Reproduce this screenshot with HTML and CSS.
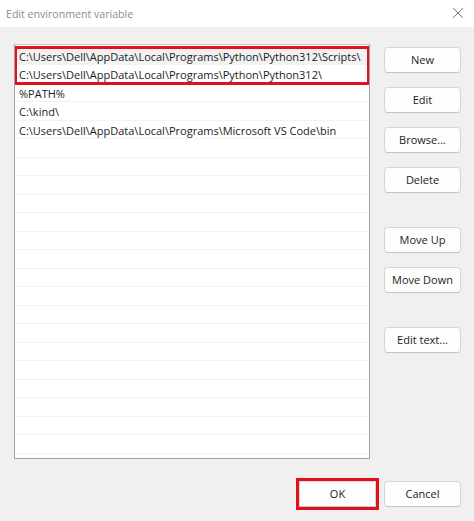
FILE: index.html
```html
<!DOCTYPE html>
<html lang="en">
<head>
  <meta charset="UTF-8">
  <title>Edit environment variable</title>
  <link rel="stylesheet" href="styles.css">
</head>
<body>
  <div class="dialog">
    <div class="titlebar">
      <span class="title">Edit environment variable</span>
      <span class="close">
        <svg width="12" height="12" viewBox="0 0 12 12"><path d="M1 1L11 11M11 1L1 11" stroke="#7a7a7a" stroke-width="1" fill="none"/></svg>
      </span>
    </div>
    <div class="content">
      <div class="main">
        <div class="list">
          <!--前两行是被标出来的-->
          <div class="marked">
            <div class="row sel">C:\Users\Dell\AppData\Local\Programs\Python\Python312\Scripts\</div>
            <div class="row">C:\Users\Dell\AppData\Local\Programs\Python\Python312\</div>
          </div>
          <div class="row">%PATH%</div>
          <div class="row">C:\kind\</div>
          <div class="row">C:\Users\Dell\AppData\Local\Programs\Microsoft VS Code\bin</div>
          <div class="row"></div>
          <div class="row"></div>
          <div class="row"></div>
          <div class="row"></div>
          <div class="row"></div>
          <div class="row"></div>
          <div class="row"></div>
          <div class="row"></div>
          <div class="row"></div>
          <div class="row"></div>
          <div class="row"></div>
          <div class="row"></div>
          <div class="row"></div>
          <div class="row"></div>
          <div class="row"></div>
          <div class="row"></div>
          <div class="row"></div>
        </div>
        <div class="side">
          <a class="btn" href="javascript:;">New</a>
          <a class="btn" href="javascript:;">Edit</a>
          <a class="btn" href="javascript:;">Browse...</a>
          <a class="btn" href="javascript:;">Delete</a>
          <a class="btn gap" href="javascript:;">Move Up</a>
          <a class="btn" href="javascript:;">Move Down</a>
          <a class="btn gap" href="javascript:;">Edit text...</a>
        </div>
      </div>
      <div class="footer">
        <a class="btn ok" href="javascript:;">OK</a>
        <a class="btn" href="javascript:;">Cancel</a>
      </div>
    </div>
  </div>
</body>
</html>
```
FILE: styles.css
```css
*{
  margin: 0;
  padding: 0;
  box-sizing: border-box;
}
body{
  width: 474px;
  height: 521px;
  background: #f0f0f0;
  font-family: "Open Sans", "Noto Sans", sans-serif;
  font-size: 11px;
  color: #1b1b1b;
  overflow: hidden;
}
.dialog{
  height: 521px;
  display: flex;
  flex-direction: column;
}
.titlebar{
  height: 27px;
  background: #fff;
  display: flex;
  align-items: center;
  justify-content: space-between;
  padding: 0 10px 0 6px;
}
.title{
  color: #8c8c8c;
  font-size: 10.6px;
}
.close{
  display: flex;
  margin-top: -1px;
}
.content{
  flex: 1;
  padding: 17px 12px 0 14px;
}
.main{
  display: flex;
}
.list{
  width: 356px;
  height: 415px;
  background: #fff;
  border: 1px solid #a3a3a3;
  border-top-color: #c8c8c8;
  padding-top: 1.5px;
  overflow: hidden;
}
.row{
  height: 18.5px;
  line-height: 19px;
  padding-left: 4px;
  border-bottom: 1px solid #f3f3f3;
  white-space: nowrap;
}
.row.sel{
  background: #f2f2f2;
}
.marked{
  outline: 3px solid #e3101c;
  outline-offset: -2px;
}
.side{
  display: flex;
  flex-direction: column;
  gap: 14px;
  margin-left: 14px;
  padding-top: 3px;
}
.btn{
  display: block;
  width: 77px;
  height: 26px;
  line-height: 24px;
  text-align: center;
  text-decoration: none;
  color: #1b1b1b;
  background: #fdfdfd;
  border: 1px solid #d6d6d6;
  border-bottom-color: #c4c4c4;
  border-radius: 4px;
}
.side .gap{
  margin-top: 20px;
}
.footer{
  display: flex;
  justify-content: flex-end;
  gap: 8px;
  margin-top: 22px;
  padding-right: 1px;
}
.ok{
  border-radius: 0;
  outline: 3px solid #e3101c;
  outline-offset: 0;
}
```
